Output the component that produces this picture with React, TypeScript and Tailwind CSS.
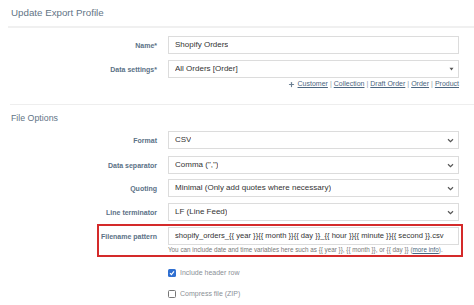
import { Plus } from 'lucide-react';

function Chevron() {
  return (
    <svg width="7" height="5" viewBox="0 0 7 5" className="shrink-0">
      <path d="M1 1.2 L3.5 3.6 L6 1.2" fill="none" stroke="#555" strokeWidth="1.2" />
    </svg>
  );
}

function Caret() {
  return (
    <svg width="5" height="4" viewBox="0 0 5 4" className="shrink-0">
      <path d="M0.5 0.8 L4.5 0.8 L2.5 3.4 Z" fill="#555" />
    </svg>
  );
}

function Label({ children, w = 'w-[157px]' }: { children: React.ReactNode; w?: string }) {
  return (
    <div className={`${w} shrink-0 text-right whitespace-nowrap text-[7px] font-bold text-[#5b7186] leading-none`}>
      {children}
    </div>
  );
}

function Field({ value, select, caret, small }: { value: string; select?: boolean; caret?: boolean; small?: boolean }) {
  return (
    <div className={`ml-[11px] w-[291px] h-[18px] shrink-0 border border-[#dcdcdc] bg-white flex items-center justify-between pl-[6px] pr-[4px] ${small ? 'text-[7.6px]' : 'text-[8px]'} text-[#333]`}>
      <span className="whitespace-nowrap overflow-hidden">{value}</span>
      {select && (caret ? <Caret /> : <Chevron />)}
    </div>
  );
}

function Row({ label, value, select, caret, mt }: { label: string; value: string; select?: boolean; caret?: boolean; mt: string }) {
  return (
    <div className={`flex items-center ${mt}`}>
      <Label>{label}</Label>
      <Field value={value} select={select} caret={caret} />
    </div>
  );
}

export default function App() {
  const links = ['Customer', 'Collection', 'Draft Order', 'Order', 'Product'];

  return (
    <div className="w-[474px] h-[305px] overflow-hidden bg-white font-['Liberation_Sans',Arial,sans-serif]">
      {/* Header */}
      <div className="h-[26px] pl-[11px] flex items-center text-[9.75px] text-[#627486]">Update Export Profile</div>
      <div className="ml-[8px] h-[2px] bg-[#f0f0f0]" />

      <Row label="Name*" value="Shopify Orders" mt="mt-[8px]" />
      <Row label="Data settings*" value="All Orders [Order]" select caret mt="mt-[6px]" />

      <div className="flex justify-end items-center w-[459px] mt-[1px] text-[7px] text-[#4c6680] gap-[2px] h-[10px]">
        <Plus size={7} strokeWidth={4} className="text-[#6b7f92] mr-[1px]" />
        {links.map((l, i) => (
          <span key={l} className="flex gap-[2px]">
            {i > 0 && <span className="text-[#8a9aab]">|</span>}
            <span className="underline">{l}</span>
          </span>
        ))}
      </div>

      <div className="ml-[10px] mt-[15px] h-[1px] bg-[#eeeeee]" />

      {/* File options */}
      <div className="pl-[11px] h-[22px] mt-[3px] flex items-center text-[8.8px] text-[#627486]">File Options</div>

      <Row label="Format" value="CSV" select mt="mt-[1px]" />
      <Row label="Data separator" value={'Comma (",")'} select mt="mt-[7px]" />
      <Row label="Quoting" value="Minimal (Only add quotes where necessary)" select mt="mt-[5px]" />
      <Row label="Line terminator" value="LF (Line Feed)" select mt="mt-[6px]" />

      <div className="ml-[97px] w-[366px] mt-[3px] border-2 border-[#d42a2a] pt-[1px] pb-[1px]">
        <div className="flex items-center">
          <Label w="w-[58px]">Filename pattern</Label>
          <Field small value="shopify_orders_{{ year }}{{ month }}{{ day }}_{{ hour }}{{ minute }}{{ second }}.csv" />
        </div>
        <div className="ml-[69px] mt-[1px] text-[6.3px] text-[#777] leading-[8px] whitespace-nowrap">
          You can include date and time variables here such as {'{{ year }}'}, {'{{ month }}'}, or {'{{ day }}'} (
          <span className="underline text-[#4c6680]">more info</span>).
        </div>
      </div>

      <div className="ml-[168px] mt-[10px] flex items-center gap-[4px] text-[7px] leading-[12px] text-[#8a8f96]">
        <div className="w-[8px] h-[8px] rounded-[1.5px] bg-[#2f6fd1] flex items-center justify-center">
          <svg width="6" height="6" viewBox="0 0 6 6">
            <path d="M1 3.2 L2.4 4.6 L5 1.4" fill="none" stroke="#fff" strokeWidth="1.2" />
          </svg>
        </div>
        Include header row
      </div>
      <div className="ml-[168px] mt-[9px] flex items-center gap-[4px] text-[7px] leading-[12px] text-[#8a8f96]">
        <div className="w-[8px] h-[8px] rounded-[1.5px] border border-[#777] bg-white" />
        Compress file (ZIP)
      </div>
    </div>
  );
}
